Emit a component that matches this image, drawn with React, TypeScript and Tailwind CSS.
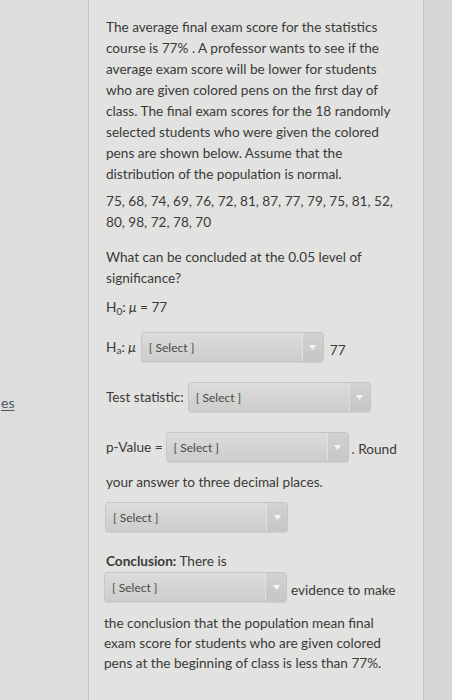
function Select({ width = "w-[183px]" }: { width?: string }) {
  return (
    <div
      className={`${width} h-[30px] flex items-stretch rounded-[3px] border border-[#c6c6c4] bg-gradient-to-b from-[#dcdcda] to-[#cdcdcb] shadow-[0_1px_1px_rgba(0,0,0,0.08)] shrink-0`}
    >
      <span className="flex-1 flex items-center pl-[7px] text-[12px] text-[#4a4a4a]">[ Select ]</span>
      <span className="w-[21px] flex items-center justify-center border-l border-[#e0e0de] bg-gradient-to-b from-[#d2d2d0] to-[#c6c6c4]">
        <svg width="7" height="5" viewBox="0 0 7 5">
          <path d="M0 0 L7 0 L3.5 5 Z" fill="#f4f4f2" />
        </svg>
      </span>
    </div>
  );
}

export default function App() {
  return (
    <div
      className="w-[452px] h-[700px] overflow-hidden flex bg-[#dcdcda] text-[#3a3a3a]"
      style={{ fontFamily: "Lato, 'Open Sans', sans-serif" }}
    >
      <div className="w-[88px] shrink-0 overflow-hidden pt-[392px]">
        <a className="block ml-[1px] text-[14px] leading-[21px] text-[#4c5866] underline underline-offset-2 whitespace-nowrap">
          es
        </a>
      </div>

      <div className="w-[336px] shrink-0 border-l border-r border-[#c2c2c0] bg-[#e2e2e0] pl-[17px] pt-[17px] text-[13.6px] leading-[21px]">
        <div className="w-[292px]">
          <p>
            The average final exam score for the statistics course is 77% . A professor wants to see if the average
            exam score will be lower for students who are given colored pens on the first day of class. The final exam
            scores for the 18 randomly selected students who were given the colored pens are shown below. Assume that
            the distribution of the population is normal.
          </p>
          <p className="mt-[6px]">75, 68, 74, 69, 76, 72, 81, 87, 77, 79, 75, 81, 52, 80, 98, 72, 78, 70</p>
          <p className="mt-[14px]">What can be concluded at the 0.05 level of significance?</p>

          <p className="mt-[8px]">
            H<sub className="text-[10px]">0</sub>: <i>μ</i> = 77
          </p>

          <div className="mt-[14px] flex items-center gap-[5px]">
            <span>
              H<sub className="text-[10px]">a</sub>: <i>μ</i>
            </span>
            <Select />
            <span className="ml-[1px] mt-[6px]">77</span>
          </div>

          <div className="mt-[20px] flex items-center gap-[4px]">
            <span>Test statistic:</span>
            <Select />
          </div>

          <div className="mt-[20px] flex items-center gap-[3px] whitespace-nowrap">
            <span>p-Value =</span>
            <Select />
            <span className="mt-[4px]">. Round</span>
          </div>
          <p className="mt-[10px]">your answer to three decimal places.</p>

          <div className="mt-[9px] -ml-[1px]">
            <Select />
          </div>

          <p className="mt-[19px]">
            <b className="font-bold">Conclusion:</b> There is
          </p>
          <div className="flex items-center gap-[4px] -ml-[2px] whitespace-nowrap">
            <Select />
            <span className="mt-[6px]">evidence to make</span>
          </div>

          <p className="mt-[11px] leading-[20px] -ml-[2px]">
            the conclusion that the population mean final exam score for students who are given colored pens at the
            beginning of class is less than 77%.
          </p>
        </div>
      </div>

      <div className="flex-1 bg-[#d6d6d4]" />
    </div>
  );
}
